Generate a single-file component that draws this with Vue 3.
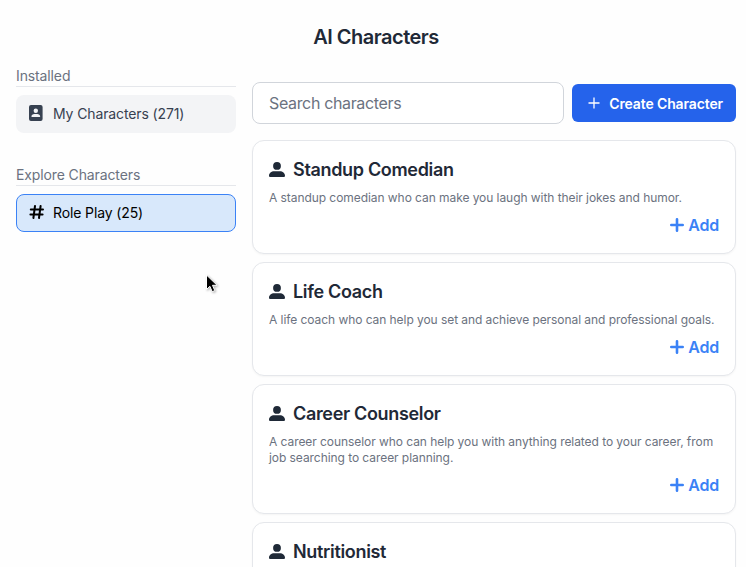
<script setup>
const userIcon =
  'M8 0a3.9 3.9 0 1 1 0 7.8a3.9 3.9 0 0 1 0-7.8zM5.2 9.2h5.6c2.9 0 5.2 2 5.2 4.5c0 .7-.6 1.3-1.3 1.3H1.3C.6 15 0 14.4 0 13.7c0-2.5 2.3-4.5 5.2-4.5z';

const characters = [
  { name: 'Standup Comedian', desc: 'A standup comedian who can make you laugh with their jokes and humor.' },
  { name: 'Life Coach', desc: 'A life coach who can help you set and achieve personal and professional goals.' },
  {
    name: 'Career Counselor',
    desc: 'A career counselor who can help you with anything related to your career, from job searching to career planning.',
  },
  { name: 'Nutritionist' },
];
</script>

<template>
  <div class="page">
    <h1 class="title">AI Characters</h1>
    <div class="layout">
      <aside class="sidebar">
        <div class="group">
          <h2 class="group-label">Installed</h2>
          <button class="nav-item">
            <svg class="nav-icon" viewBox="0 0 16 16" fill="#374151" fill-rule="evenodd">
              <path
                d="M2 0h9.6a2 2 0 0 1 2 2v12a2 2 0 0 1-2 2H2a2 2 0 0 1-2-2V2a2 2 0 0 1 2-2zM6.8 3.6a2.2 2.2 0 1 0 0 4.4a2.2 2.2 0 0 0 0-4.4zM5.4 9c-1.7 0-3 1.2-3 2.6c0 .3.2.5.5.5h7.8c.3 0 .5-.2.5-.5c0-1.4-1.3-2.6-3-2.6z"
              />
            </svg>
            My Characters (271)
          </button>
        </div>
        <div class="group">
          <h2 class="group-label">Explore Characters</h2>
          <button class="nav-item active">
            <svg class="nav-icon" viewBox="0 0 16 16" fill="none" stroke="#000" stroke-width="2" stroke-linecap="round">
              <path d="M6 2 4.4 14M11.6 2 10 14M1.8 5.6h12.2M1.4 10.4h12.2" />
            </svg>
            Role Play (25)
          </button>
        </div>
      </aside>

      <main class="main">
        <div class="toolbar">
          <input class="search" type="text" placeholder="Search characters" />
          <button class="create">
            <svg class="create-icon" viewBox="0 0 14 14" fill="none" stroke="#fff" stroke-width="1.3">
              <path d="M7 1.5v11M1.5 7h11" />
            </svg>
            Create Character
          </button>
        </div>
        <div class="cards">
          <article class="card" v-for="c in characters" :key="c.name">
            <h3 class="card-title">
              <svg class="user-icon" viewBox="0 0 16 15" fill="#1f2937"><path :d="userIcon" /></svg>
              {{ c.name }}
            </h3>
            <template v-if="c.desc">
              <p class="card-desc">{{ c.desc }}</p>
              <div class="card-foot">
                <button class="add">
                  <svg class="add-icon" viewBox="0 0 14 14" fill="none" stroke="#3b82f6" stroke-width="2.6" stroke-linecap="round">
                    <path d="M7 1.3v11.4M1.3 7h11.4" />
                  </svg>
                  Add
                </button>
              </div>
            </template>
          </article>
        </div>
      </main>
    </div>

    <svg class="cursor" viewBox="0 0 14 20" width="14" height="20">
      <path
        d="M1.5 1v14.5l3.4-3.2 2.3 5.4 2.6-1.1-2.3-5.3h4.6z"
        fill="#000"
        stroke="#fff"
        stroke-width="1"
        stroke-linejoin="round"
      />
    </svg>
  </div>
</template>

<style>
html,
body {
  margin: 0;
  height: 100%;
  overflow: hidden;
  background: #fefefe;
}
</style>

<style scoped>
.page {
  position: relative;
  box-sizing: border-box;
  width: 746px;
  height: 567px;
  overflow: hidden;
  padding: 23px 10px 0 16px;
  font-family: Inter, 'Liberation Sans', sans-serif;
  color: #1f2937;
}
.title {
  margin: 0 0 15px;
  font-size: 20px;
  line-height: 28px;
  font-weight: 600;
  letter-spacing: -0.5px;
  text-align: center;
}
.layout {
  display: flex;
  gap: 16px;
}
.sidebar {
  flex: 0 0 220px;
  display: flex;
  flex-direction: column;
  gap: 32px;
}
.group-label {
  margin: 0 0 8px;
  border-bottom: 1px solid #e5e7eb;
  font-size: 14px;
  line-height: 20px;
  font-weight: 400;
  letter-spacing: -0.12px;
  color: #6b7280;
}
.nav-item {
  display: flex;
  align-items: center;
  gap: 8px;
  box-sizing: border-box;
  width: 100%;
  height: 38px;
  padding: 0 12px 2px;
  border: 1px solid transparent;
  border-radius: 8px;
  background: #f3f4f6;
  font: inherit;
  font-size: 14px;
  letter-spacing: -0.12px;
  color: #374151;
}
.nav-item.active {
  background: #d8e8fb;
  border-color: #3b82f6;
  color: #000;
}
.nav-icon {
  width: 16px;
  height: 16px;
  flex: none;
}
.main {
  flex: 1;
  min-width: 0;
  padding-top: 16px;
}
.toolbar {
  display: flex;
  align-items: center;
  gap: 8px;
  margin-bottom: 16px;
}
.search {
  flex: 1;
  min-width: 0;
  box-sizing: border-box;
  height: 42px;
  padding: 0 16px;
  border: 1px solid #d1d5db;
  border-radius: 8px;
  background: #fff;
  font: inherit;
  font-size: 16px;
  letter-spacing: -0.35px;
  outline: none;
}
.search::placeholder {
  color: #6b7280;
  opacity: 1;
}
.create {
  display: flex;
  align-items: center;
  gap: 8px;
  height: 38px;
  padding: 0 13px 0 15px;
  border: 0;
  border-radius: 6px;
  background: #2563eb;
  color: #fff;
  font: inherit;
  font-size: 14px;
  font-weight: 600;
  letter-spacing: -0.13px;
  white-space: nowrap;
}
.create-icon {
  width: 14px;
  height: 14px;
}
.cards {
  display: flex;
  flex-direction: column;
  gap: 8px;
}
.card {
  padding: 17px 16px 16px;
  border: 1px solid #e5e7eb;
  border-radius: 12px;
  background: #fff;
  box-shadow: 0 1px 2px rgba(0, 0, 0, 0.04);
}
.card-title {
  display: flex;
  align-items: center;
  gap: 8px;
  margin: 0;
  font-size: 18px;
  line-height: 24px;
  font-weight: 600;
  letter-spacing: -0.33px;
  color: #1f2937;
}
.user-icon {
  width: 16px;
  height: 15px;
  margin-bottom: 2px;
  flex: none;
}
.card-desc {
  margin: 8px 0 0;
  font-size: 12px;
  line-height: 16px;
  letter-spacing: -0.06px;
  color: #6b7280;
}
.card-foot {
  display: flex;
  justify-content: flex-end;
  margin-top: 7px;
}
.add {
  display: flex;
  align-items: center;
  gap: 4px;
  height: 24px;
  padding: 0;
  border: 0;
  background: none;
  font: inherit;
  font-size: 16px;
  font-weight: 600;
  letter-spacing: -0.2px;
  color: #3b82f6;
}
.add-icon {
  width: 14px;
  height: 14px;
}
.cursor {
  position: absolute;
  left: 205px;
  top: 274px;
  filter: drop-shadow(1px 1px 1px rgba(0, 0, 0, 0.3));
}
</style>
